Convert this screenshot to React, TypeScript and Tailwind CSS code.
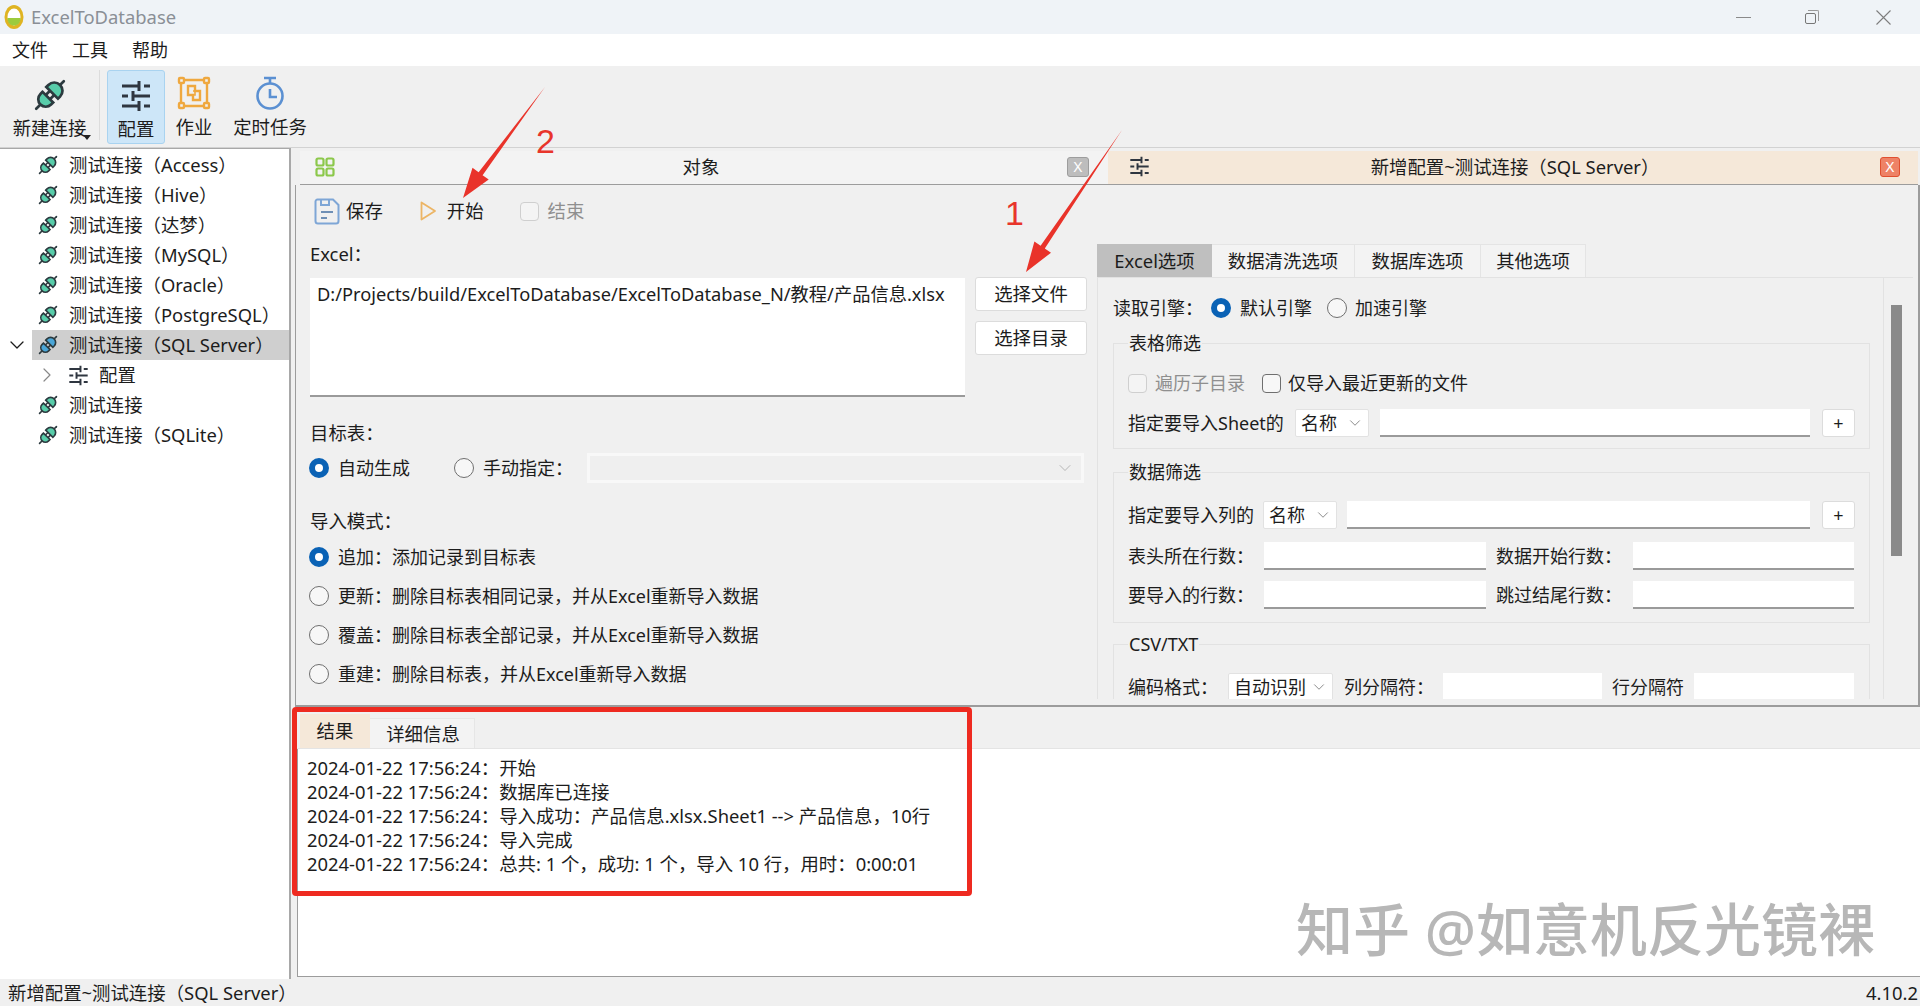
import { ChevronDown, ChevronRight } from "lucide-react";

// ─── Icons ────────────────────────────────────────────────────────────────────

function Plug({ size = 22, fill = "#58cdaa" }: { size?: number; fill?: string }) {
  return (
    <svg width={size} height={size} viewBox="0 0 24 24" className="shrink-0">
      <g transform="rotate(-45 12 12)" stroke="#2c3a3f" strokeWidth="1.8" fill={fill} strokeLinecap="round">
        <path d="M-1 12H3.5" />
        <path d="M25 12H20.5" />
        <path d="M10 10h3.5M10 14h3.5" />
        <path d="M10 7H8a5 5 0 0 0 0 10h2z" />
        <path d="M14 6.5h2a5.5 5.5 0 0 1 0 11h-2z" />
      </g>
    </svg>
  );
}

function Sliders({ size = 32 }: { size?: number }) {
  return (
    <svg width={size} height={size} viewBox="0 0 32 32" className="shrink-0" stroke="#2f3640" strokeWidth="3">
      <path d="M2 6H19M19 1V11M24 6H30" />
      <path d="M2 16H8M13 11V21M13 16H30" />
      <path d="M2 26H19M19 21V31M24 26H30" />
    </svg>
  );
}

function JobIcon() {
  return (
    <svg width="34" height="34" viewBox="0 0 34 34" fill="none" stroke="#efa83f" strokeWidth="2.4" className="shrink-0">
      <path d="M6 4H28M6 30H28M4 6V28M30 6V28" />
      <rect x="2" y="2" width="5" height="5" rx="1" fill="#f0f0f0" />
      <rect x="27" y="2" width="5" height="5" rx="1" fill="#f0f0f0" />
      <rect x="2" y="27" width="5" height="5" rx="1" fill="#f0f0f0" />
      <rect x="27" y="27" width="5" height="5" rx="1" fill="#f0f0f0" />
      <path d="M11 10H18V15H23V24H16V19H11Z" />
      <path d="M16 15H18V19H16" strokeWidth="1.6" />
    </svg>
  );
}

function ClockIcon() {
  return (
    <svg width="32" height="34" viewBox="0 0 32 34" fill="none" stroke="#5b90d2" strokeWidth="2.6" className="shrink-0">
      <circle cx="16" cy="20" r="12.5" />
      <path d="M10 2H22M16 2V7" />
      <path d="M16 13V21H23" />
    </svg>
  );
}

function GridIcon() {
  return (
    <svg width="20" height="20" viewBox="0 0 20 20" fill="none" stroke="#8cc84b" strokeWidth="2.2" className="shrink-0">
      <rect x="1.5" y="1.5" width="7" height="7" rx="1.5" />
      <rect x="11.5" y="1.5" width="7" height="7" rx="1.5" />
      <rect x="1.5" y="11.5" width="7" height="7" rx="1.5" />
      <rect x="11.5" y="11.5" width="7" height="7" rx="1.5" />
    </svg>
  );
}

function SaveIcon() {
  return (
    <svg width="26" height="27" viewBox="0 0 26 27" fill="none" stroke="#7ea6d6" strokeWidth="2" className="shrink-0">
      <path d="M3.5 1.5H19L24.5 7V23a2.5 2.5 0 0 1-2.5 2.5H4A2.5 2.5 0 0 1 1.5 23V3.5a2 2 0 0 1 2-2Z" />
      <path d="M7 1.5V7H15V1.5" />
      <path d="M7 14H19M7 20H13" stroke="#6f8fb5" />
    </svg>
  );
}

function PlayIcon() {
  return (
    <svg width="17" height="20" viewBox="0 0 17 20" fill="none" stroke="#ecb565" strokeWidth="1.8" className="block shrink-0">
      <path d="M1.5 1.5L15 10L1.5 18.5Z" strokeLinejoin="round" />
    </svg>
  );
}

function Logo() {
  return (
    <svg width="20" height="24" viewBox="0 0 20 24" className="shrink-0">
      <ellipse cx="10" cy="12" rx="9.5" ry="12" fill="#dfb422" />
      <ellipse cx="10" cy="12" rx="6.5" ry="8.5" fill="#fff" />
      <path d="M3.5 13H16.5C16.5 18 13.5 20.5 10 20.5S3.5 18 3.5 13Z" fill="#9ccb3c" />
    </svg>
  );
}

// ─── Small form parts ─────────────────────────────────────────────────────────

function Radio({ on = false }: { on?: boolean }) {
  return on ? (
    <span className="block w-[20px] h-[20px] shrink-0 rounded-full border-[6px] border-[#0a62b5] bg-white" />
  ) : (
    <span className="block w-[20px] h-[20px] shrink-0 rounded-full border border-[#6f6f6f] bg-[#f7f7f7]" />
  );
}

function Check({ disabled = false }: { disabled?: boolean }) {
  return (
    <span
      className={`block w-[19px] h-[19px] shrink-0 rounded-[4px] border ${
        disabled ? "border-[#cfcfcf] bg-[#f4f4f4]" : "border-[#6f6f6f] bg-[#f7f7f7]"
      }`}
    />
  );
}

function Field({ className = "" }: { className?: string }) {
  return <div className={`h-[28px] bg-white border-b-2 border-[#9a9a9a] ${className}`} />;
}

function Combo({ label, className = "" }: { label: string; className?: string }) {
  return (
    <div className={`h-[28px] flex items-center justify-between pl-[5px] pr-[4px] bg-white border border-[#e2e2e2] rounded-[2px] ${className}`}>
      <span>{label}</span>
      <ChevronDown size={18} strokeWidth={1} color="#666" />
    </div>
  );
}

function PlusBtn() {
  return (
    <div className="w-[33px] h-[28px] shrink-0 flex items-center justify-center bg-white border border-[#dcdcdc] rounded-[3px]">
      +
    </div>
  );
}

function PickBtn({ label }: { label: string }) {
  return (
    <div className="h-[34px] flex items-center justify-center bg-white border border-[#dcdcdc] rounded-[3px]">
      {label}
    </div>
  );
}

function Group({ title, className = "", children }: { title: string; className?: string; children: React.ReactNode }) {
  return (
    <fieldset className={`w-[757px] border border-[#e2e2e2] px-[14px] ${className}`}>
      <legend className="h-[24px] leading-[24px] px-[1px]">{title}</legend>
      {children}
    </fieldset>
  );
}

function Toolbtn({ label, icon, className = "" }: { label: string; icon: React.ReactNode; className?: string }) {
  return (
    <div className={`flex flex-col items-center ${className}`}>
      <div className="h-[45px] pt-[6px] flex items-start justify-center">{icon}</div>
      <div className="leading-[24px] whitespace-nowrap">{label}</div>
    </div>
  );
}

// ─── Data ─────────────────────────────────────────────────────────────────────

const connections = [
  "测试连接（Access）",
  "测试连接（Hive）",
  "测试连接（达梦）",
  "测试连接（MySQL）",
  "测试连接（Oracle）",
  "测试连接（PostgreSQL）",
];

const logLines = [
  "2024-01-22 17:56:24：开始",
  "2024-01-22 17:56:24：数据库已连接",
  "2024-01-22 17:56:24：导入成功：产品信息.xlsx.Sheet1 --> 产品信息，10行",
  "2024-01-22 17:56:24：导入完成",
  "2024-01-22 17:56:24：总共: 1 个，成功: 1 个，导入 10 行，用时：0:00:01",
];

const modes = [
  "更新：删除目标表相同记录，并从Excel重新导入数据",
  "覆盖：删除目标表全部记录，并从Excel重新导入数据",
  "重建：删除目标表，并从Excel重新导入数据",
];

// ─── Page ─────────────────────────────────────────────────────────────────────

export default function App() {
  return (
    <div className="relative w-[1920px] h-[1006px] overflow-hidden flex flex-col bg-[#f0f0f0] text-[18.4px] text-[#1c1c1c] font-['Noto_Sans','Noto_Sans_CJK_SC',sans-serif]">
      {/* Title bar */}
      <div className="h-[34px] shrink-0 flex items-center bg-[#eff3f7] pl-[4px]">
        <Logo />
        <span className="ml-[7px] text-[#8a8f96]">ExcelToDatabase</span>
        <div className="ml-auto flex items-center">
          <div className="w-[15px] h-px bg-[#8a8a8a] mr-[54px]" />
          <div className="relative w-[14px] h-[14px] mr-[57px]">
            <div className="absolute left-[0px] top-[3px] w-[11px] h-[11px] border border-[#777] rounded-[2px]" />
            <div className="absolute left-[3px] top-[0px] w-[11px] h-[11px] border-t border-r border-[#999] rounded-tr-[2px]" />
          </div>
          <svg width="15" height="15" viewBox="0 0 15 15" stroke="#7d7d7d" strokeWidth="1.1" className="mr-[29px]">
            <path d="M0.5 0.5L14.5 14.5M14.5 0.5L0.5 14.5" />
          </svg>
        </div>
      </div>

      {/* Menu */}
      <div className="h-[32px] shrink-0 flex items-center gap-[24px] bg-white pl-[12px] text-[18px]">
        <span>文件</span>
        <span>工具</span>
        <span>帮助</span>
      </div>

      {/* Toolbar */}
      <div className="h-[82px] shrink-0 flex items-start pt-[4px] border-b border-[#d2d2d2]">
        <div className="relative w-[100px] shrink-0 border-r border-[#dcdcdc] h-[70px] pt-[1px]">
          <Toolbtn label="新建连接" icon={<Plug size={36} />} />
          <svg width="8" height="5" viewBox="0 0 8 5" className="absolute left-[83px] top-[65px]">
            <path d="M0 0H8L4 5Z" fill="#222" />
          </svg>
        </div>
        <div className="ml-[7px] w-[58px] h-[74px] bg-[#cde6f8] border border-[#a9d3f0] rounded-[3px] flex flex-col items-center">
          <div className="h-[46px] pt-[9px]"><Sliders /></div>
          <div className="leading-[24px] whitespace-nowrap">配置</div>
        </div>
        <Toolbtn label="作业" icon={<JobIcon />} className="ml-[10px] w-[38px]" />
        <Toolbtn label="定时任务" icon={<ClockIcon />} className="ml-[21px] w-[72px]" />
      </div>

      {/* Main */}
      <div className="flex-1 min-h-0 flex">
        {/* Connection tree */}
        <div className="w-[291px] shrink-0 bg-white border-r-2 border-[#a8a8a8] border-t border-t-[#a8a8a8] pt-[1px]">
          {connections.map((name) => (
            <div key={name} className="h-[30px] flex items-center pl-[37px] gap-[10px]">
              <Plug />
              <span>{name}</span>
            </div>
          ))}
          <div className="h-[30px] flex items-center">
            <ChevronDown size={24} strokeWidth={1.3} className="ml-[5px] shrink-0" />
            <div className="ml-[3px] flex-1 h-full flex items-center pl-[5px] gap-[10px] bg-[#cfcfcf]">
              <Plug fill="#4aa6d8" />
              <span>测试连接（SQL Server）</span>
            </div>
          </div>
          <div className="h-[30px] flex items-center pl-[35px]">
            <ChevronRight size={24} strokeWidth={1.2} color="#888" />
            <div className="ml-[9px]"><Sliders size={21} /></div>
            <span className="ml-[10px]">配置</span>
          </div>
          {["测试连接", "测试连接（SQLite）"].map((name) => (
            <div key={name} className="h-[30px] flex items-center pl-[37px] gap-[10px]">
              <Plug />
              <span>{name}</span>
            </div>
          ))}
        </div>

        {/* Work area */}
        <div className="flex-1 min-w-0 flex flex-col pl-[4px]">
          {/* Dock headers */}
          <div className="h-[37px] shrink-0 pt-[3px] pl-[5px] flex">
            <div className="w-[808px] flex items-center pl-[15px] pr-[19px] pb-[2px] bg-[#f3f3f3] border-b border-[#9c9c9c]">
              <GridIcon />
              <span className="flex-1 text-center">对象</span>
              <div className="w-[22px] h-[20px] flex items-center justify-center rounded-[3px] bg-[#bdbdbd] border border-[#9d9d9d] text-white text-[15px]">X</div>
            </div>
            <div className="w-[810px] flex items-center pl-[21px] pr-[18px] pb-[2px] bg-[#f5e8d9] border-b border-[#9c9c9c]">
              <Sliders size={21} />
              <span className="flex-1 text-center">新增配置~测试连接（SQL Server）</span>
              <div className="w-[20px] h-[20px] flex items-center justify-center rounded-[3px] bg-[#ee8266] border border-[#e04f2f] text-white text-[15px]">X</div>
            </div>
          </div>

          {/* Upper panels */}
          <div className="h-[522px] shrink-0 flex border-l border-r-2 border-b-2 border-[#9c9c9c] overflow-hidden">
            {/* Object panel */}
            <div className="w-[801px] shrink-0 pl-[14px]">
              <div className="h-[52px] flex items-center">
                <div className="ml-[4px]"><SaveIcon /></div>
                <span className="ml-[6px]">保存</span>
                <div className="ml-[37px]"><PlayIcon /></div>
                <span className="ml-[10px]">开始</span>
                <div className="ml-[36px]"><Check disabled /></div>
                <span className="ml-[9px] text-[#8f8f8f]">结束</span>
              </div>
              <div className="mt-[5px] leading-[24px]">Excel：</div>
              <div className="mt-[12px] flex gap-[10px]">
                <div className="w-[655px] h-[119px] bg-white border-b-2 border-[#9a9a9a] pl-[7px] pt-[2px] text-[18.25px]">
                  D:/Projects/build/ExcelToDatabase/ExcelToDatabase_N/教程/产品信息.xlsx
                </div>
                <div className="w-[112px] -mt-px flex flex-col gap-[10px]">
                  <PickBtn label="选择文件" />
                  <PickBtn label="选择目录" />
                </div>
              </div>
              <div className="mt-[24px] leading-[24px]">目标表：</div>
              <div className="mt-[8px] h-[30px] flex items-center -ml-px text-[18px]">
                <Radio on />
                <span className="ml-[9px]">自动生成</span>
                <div className="ml-[44px]"><Radio /></div>
                <span className="ml-[9px]">手动指定：</span>
                <div className="ml-[14px] w-[497px] h-[30px] flex items-center justify-end pr-[6px] bg-[#efefef] border-[3px] border-[#f8f8f8]">
                  <ChevronDown size={20} strokeWidth={1} color="#aaa" />
                </div>
              </div>
              <div className="mt-[26px] leading-[24px]">导入模式：</div>
              <div className="mt-[12px] -ml-px flex flex-col gap-[15px] text-[18px]">
                <div className="h-[24px] flex items-center gap-[9px]">
                  <Radio on />
                  <span>追加：添加记录到目标表</span>
                </div>
                {modes.map((m) => (
                  <div key={m} className="h-[24px] flex items-center gap-[9px]">
                    <Radio />
                    <span>{m}</span>
                  </div>
                ))}
              </div>
            </div>

            {/* Options panel */}
            <div className="flex-1 min-w-0 pt-[59px] pr-[5px] flex flex-col">
              <div className="h-[34px] shrink-0 flex border-b border-[#e2e2e2]">
                <div className="w-[115px] flex items-center justify-center bg-[#bfbfbf]">Excel选项</div>
                <div className="w-[143px] flex items-center justify-center bg-[#f3f3f3] border-r border-t border-[#e4e4e4]">数据清洗选项</div>
                <div className="w-[126px] flex items-center justify-center bg-[#f3f3f3] border-r border-t border-[#e4e4e4]">数据库选项</div>
                <div className="w-[105px] flex items-center justify-center bg-[#f3f3f3] border-r border-t border-[#e4e4e4]">其他选项</div>
              </div>
              <div className="h-[421px] shrink-0 flex border-l border-[#e2e2e2]">
                <div className="w-[786px] shrink-0 overflow-hidden border-r border-[#e2e2e2] pl-[15px] pt-[18px] text-[18px]">
                  <div className="h-[24px] flex items-center">
                    <span className="w-[98px] whitespace-nowrap">读取引擎：</span>
                    <Radio on />
                    <span className="ml-[9px]">默认引擎</span>
                    <div className="ml-[15px]"><Radio /></div>
                    <span className="ml-[8px]">加速引擎</span>
                  </div>

                  <Group title="表格筛选" className="mt-[11px] pb-[11px]">
                    <div className="mt-[16px] h-[24px] flex items-center">
                      <Check disabled />
                      <span className="ml-[8px] text-[#8f8f8f]">遍历子目录</span>
                      <div className="ml-[17px]"><Check /></div>
                      <span className="ml-[7px]">仅导入最近更新的文件</span>
                    </div>
                    <div className="mt-[14px] flex items-center">
                      <span className="w-[157px] shrink-0 whitespace-nowrap">指定要导入Sheet的</span>
                      <Combo label="名称" className="ml-[10px] w-[74px] shrink-0" />
                      <Field className="ml-[11px] flex-1" />
                      <div className="ml-[12px]"><PlusBtn /></div>
                    </div>
                  </Group>

                  <Group title="数据筛选" className="mt-[11px] pb-[13px]">
                    <div className="mt-[17px] flex items-center">
                      <span className="w-[126px] shrink-0 whitespace-nowrap">指定要导入列的</span>
                      <Combo label="名称" className="ml-[9px] w-[74px] shrink-0" />
                      <Field className="ml-[10px] flex-1" />
                      <div className="ml-[12px]"><PlusBtn /></div>
                    </div>
                    <div className="mt-[13px] flex items-center">
                      <span className="w-[136px] shrink-0 whitespace-nowrap">表头所在行数：</span>
                      <Field className="w-[222px] shrink-0" />
                      <span className="ml-[10px] w-[137px] shrink-0 whitespace-nowrap">数据开始行数：</span>
                      <Field className="w-[221px] shrink-0" />
                    </div>
                    <div className="mt-[11px] flex items-center">
                      <span className="w-[136px] shrink-0 whitespace-nowrap">要导入的行数：</span>
                      <Field className="w-[222px] shrink-0" />
                      <span className="ml-[10px] w-[137px] shrink-0 whitespace-nowrap">跳过结尾行数：</span>
                      <Field className="w-[221px] shrink-0" />
                    </div>
                  </Group>

                  <Group title="CSV/TXT" className="mt-[9px] pb-[12px]">
                    <div className="mt-[17px] flex items-center">
                      <span className="w-[100px] shrink-0 whitespace-nowrap">编码格式：</span>
                      <Combo label="自动识别" className="w-[105px] shrink-0" />
                      <span className="ml-[11px] w-[99px] shrink-0 whitespace-nowrap">列分隔符：</span>
                      <Field className="w-[159px] shrink-0" />
                      <span className="ml-[10px] w-[82px] shrink-0 whitespace-nowrap">行分隔符</span>
                      <Field className="w-[160px] shrink-0" />
                    </div>
                  </Group>
                </div>
                <div className="flex-1 pl-[7px] pt-[27px]">
                  <div className="w-[11px] h-[251px] bg-[#8a8a8a]" />
                </div>
              </div>
            </div>
          </div>

          {/* Result panel */}
          <div className="flex-1 min-h-0 flex flex-col pl-[2px] pb-[2px]">
            <div className="h-[42px] shrink-0 flex items-end pl-[3px] border-b border-[#e4e4e4]">
              <div className="w-[70px] h-[34px] flex items-center justify-center bg-[#f5e8d9]">结果</div>
              <div className="w-[105px] h-[30px] flex items-center justify-center pl-[2px] bg-[#f3f3f3] border-t border-r border-[#e6e6e6]">详细信息</div>
            </div>
            <div className="flex-1 min-h-0 bg-white border-l border-b border-[#9c9c9c] pl-[9px] pt-[7px] leading-[24px]">
              {logLines.map((line) => (
                <div key={line}>{line}</div>
              ))}
            </div>
          </div>
        </div>
      </div>

      {/* Status bar */}
      <div className="h-[27px] shrink-0 flex items-center justify-between pl-[8px] pr-[2px]">
        <span>新增配置~测试连接（SQL Server）</span>
        <span>4.10.2</span>
      </div>

      {/* Annotations painted on top of the screenshot */}
      <div className="absolute left-[292px] top-[707px] w-[680px] h-[189px] border-[5px] border-[#ee2a20] rounded-[4px]" />
      <svg width="1920" height="1006" className="absolute left-0 top-0 pointer-events-none">
        <polygon points="1122,130 1044.8,248.5 1051,252.7 1026,272 1034.4,241.5 1040.6,245.7" fill="#e9332a" />
        <polygon points="545,87 482.6,175.2 488.7,179.6 463,198 472.5,167.8 478.6,172.2" fill="#e9332a" />
      </svg>
      <span className="absolute left-[536px] top-[118px] text-[34px] leading-[46px] text-[#e8352b] font-['Liberation_Sans',sans-serif]">2</span>
      <span className="absolute left-[1005px] top-[190px] text-[34px] leading-[46px] text-[#e8352b] font-['Liberation_Sans',sans-serif]">1</span>
      <span className="absolute left-[1296px] top-[889px] text-[57px] leading-[80px] font-medium text-[#b7b7b7] whitespace-pre">知乎 @如意机反光镜裸</span>
    </div>
  );
}
